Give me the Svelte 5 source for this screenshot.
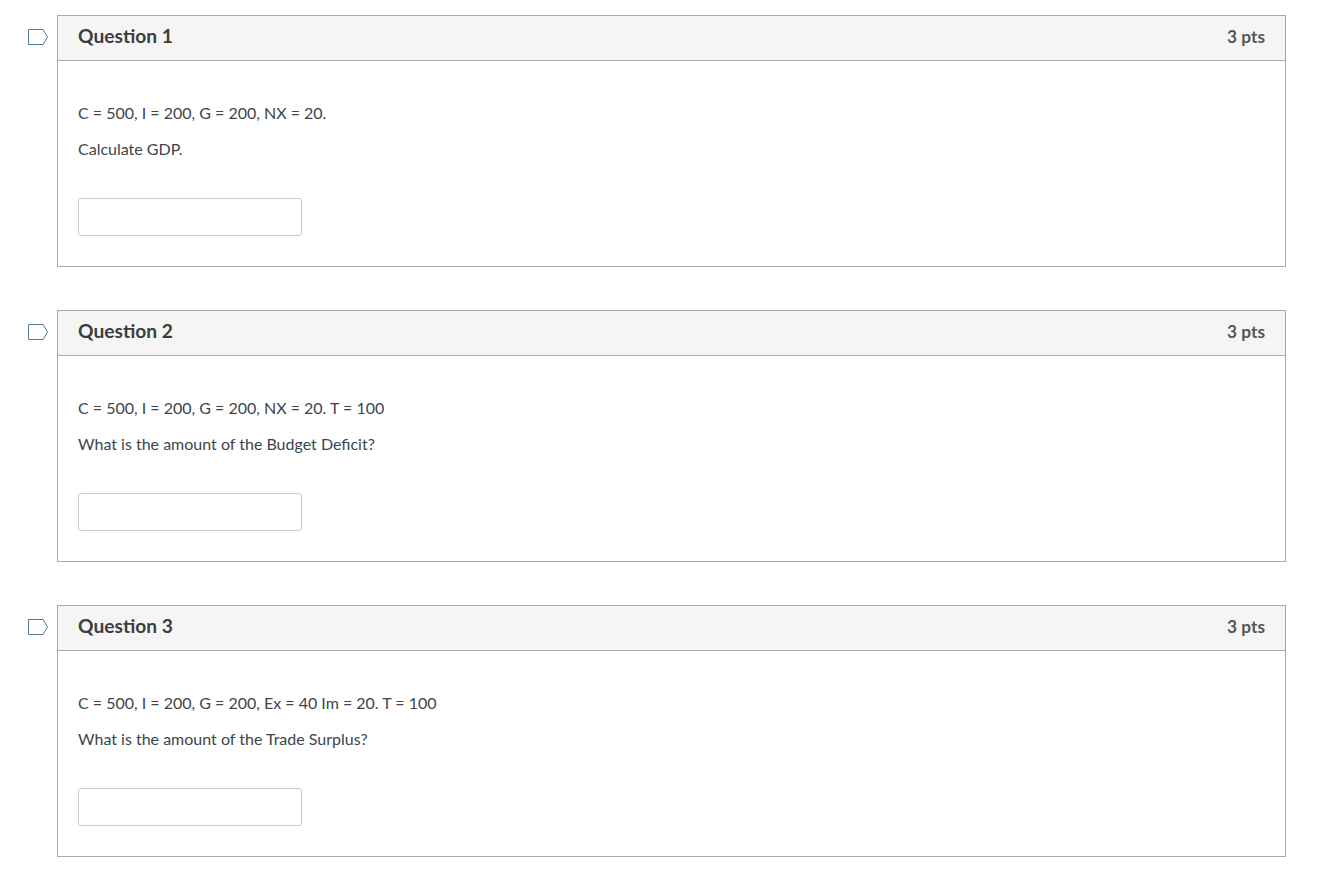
<script>
  // quiz questions shown on the page
  const questions = [
    { id: 1, lines: ["C = 500, I = 200, G = 200, NX = 20.", "Calculate GDP."] },
    { id: 2, lines: ["C = 500, I = 200, G = 200, NX = 20. T = 100", "What is the amount of the Budget Deficit?"] },
    { id: 3, lines: ["C = 500, I = 200, G = 200, Ex = 40 Im = 20. T = 100", "What is the amount of the Trade Surplus?"] }
  ];
</script>

<div class="quiz">
  {#each questions as q (q.id)}
    <section class="question">
      <svg class="flag" width="21" height="16" viewBox="0 0 21 16" aria-hidden="true">
        <path d="M0.5 0.5H15L19.5 8L15 15.5H0.5Z" fill="#fff" stroke="#4d7a9b" stroke-width="1" />
      </svg>
      <header>
        <h2>Question {q.id}</h2>
        <span class="pts">3 pts</span>
      </header>
      <div class="body">
        {#each q.lines as line}
          <p>{line}</p>
        {/each}
        <input type="text" />
      </div>
    </section>
  {/each}
</div>

<style>
  :global(body) {
    background: #fff;
    font-family: Lato, "Open Sans", sans-serif;
    color: #2d3b45;
  }

  .quiz {
    display: flex;
    flex-direction: column;
    gap: 43px;
    width: 1229px;
    margin-left: 57px;
    padding-top: 15px;
  }

  .question {
    position: relative;
    border: 1px solid #aaa;
    height: 252px;
    box-sizing: border-box;
  }

  .flag {
    position: absolute;
    left: -30px;
    top: 13px;
  }

  header {
    display: flex;
    justify-content: space-between;
    align-items: center;
    height: 45px;
    box-sizing: border-box;
    padding: 0 20px;
    background: #f5f5f5;
    border-bottom: 1px solid #aaa;
  }

  h2 {
    margin: 0 0 5px;
    font-size: 19.2px;
    font-weight: 700;
    color: #3d3d3d;
  }

  .pts {
    margin-bottom: 3px;
    font-size: 17.3px;
    font-weight: 700;
    color: #555;
  }

  .body {
    padding: 42px 20px 0;
  }

  p {
    margin: 0 0 16px;
    font-size: 16px;
    line-height: 20px;
    color: #3d454c;
  }

  input {
    display: block;
    width: 224px;
    height: 38px;
    box-sizing: border-box;
    margin-top: 39px;
    border: 1px solid #c7cdd1;
    border-radius: 3px;
    background: #fff;
  }
</style>
